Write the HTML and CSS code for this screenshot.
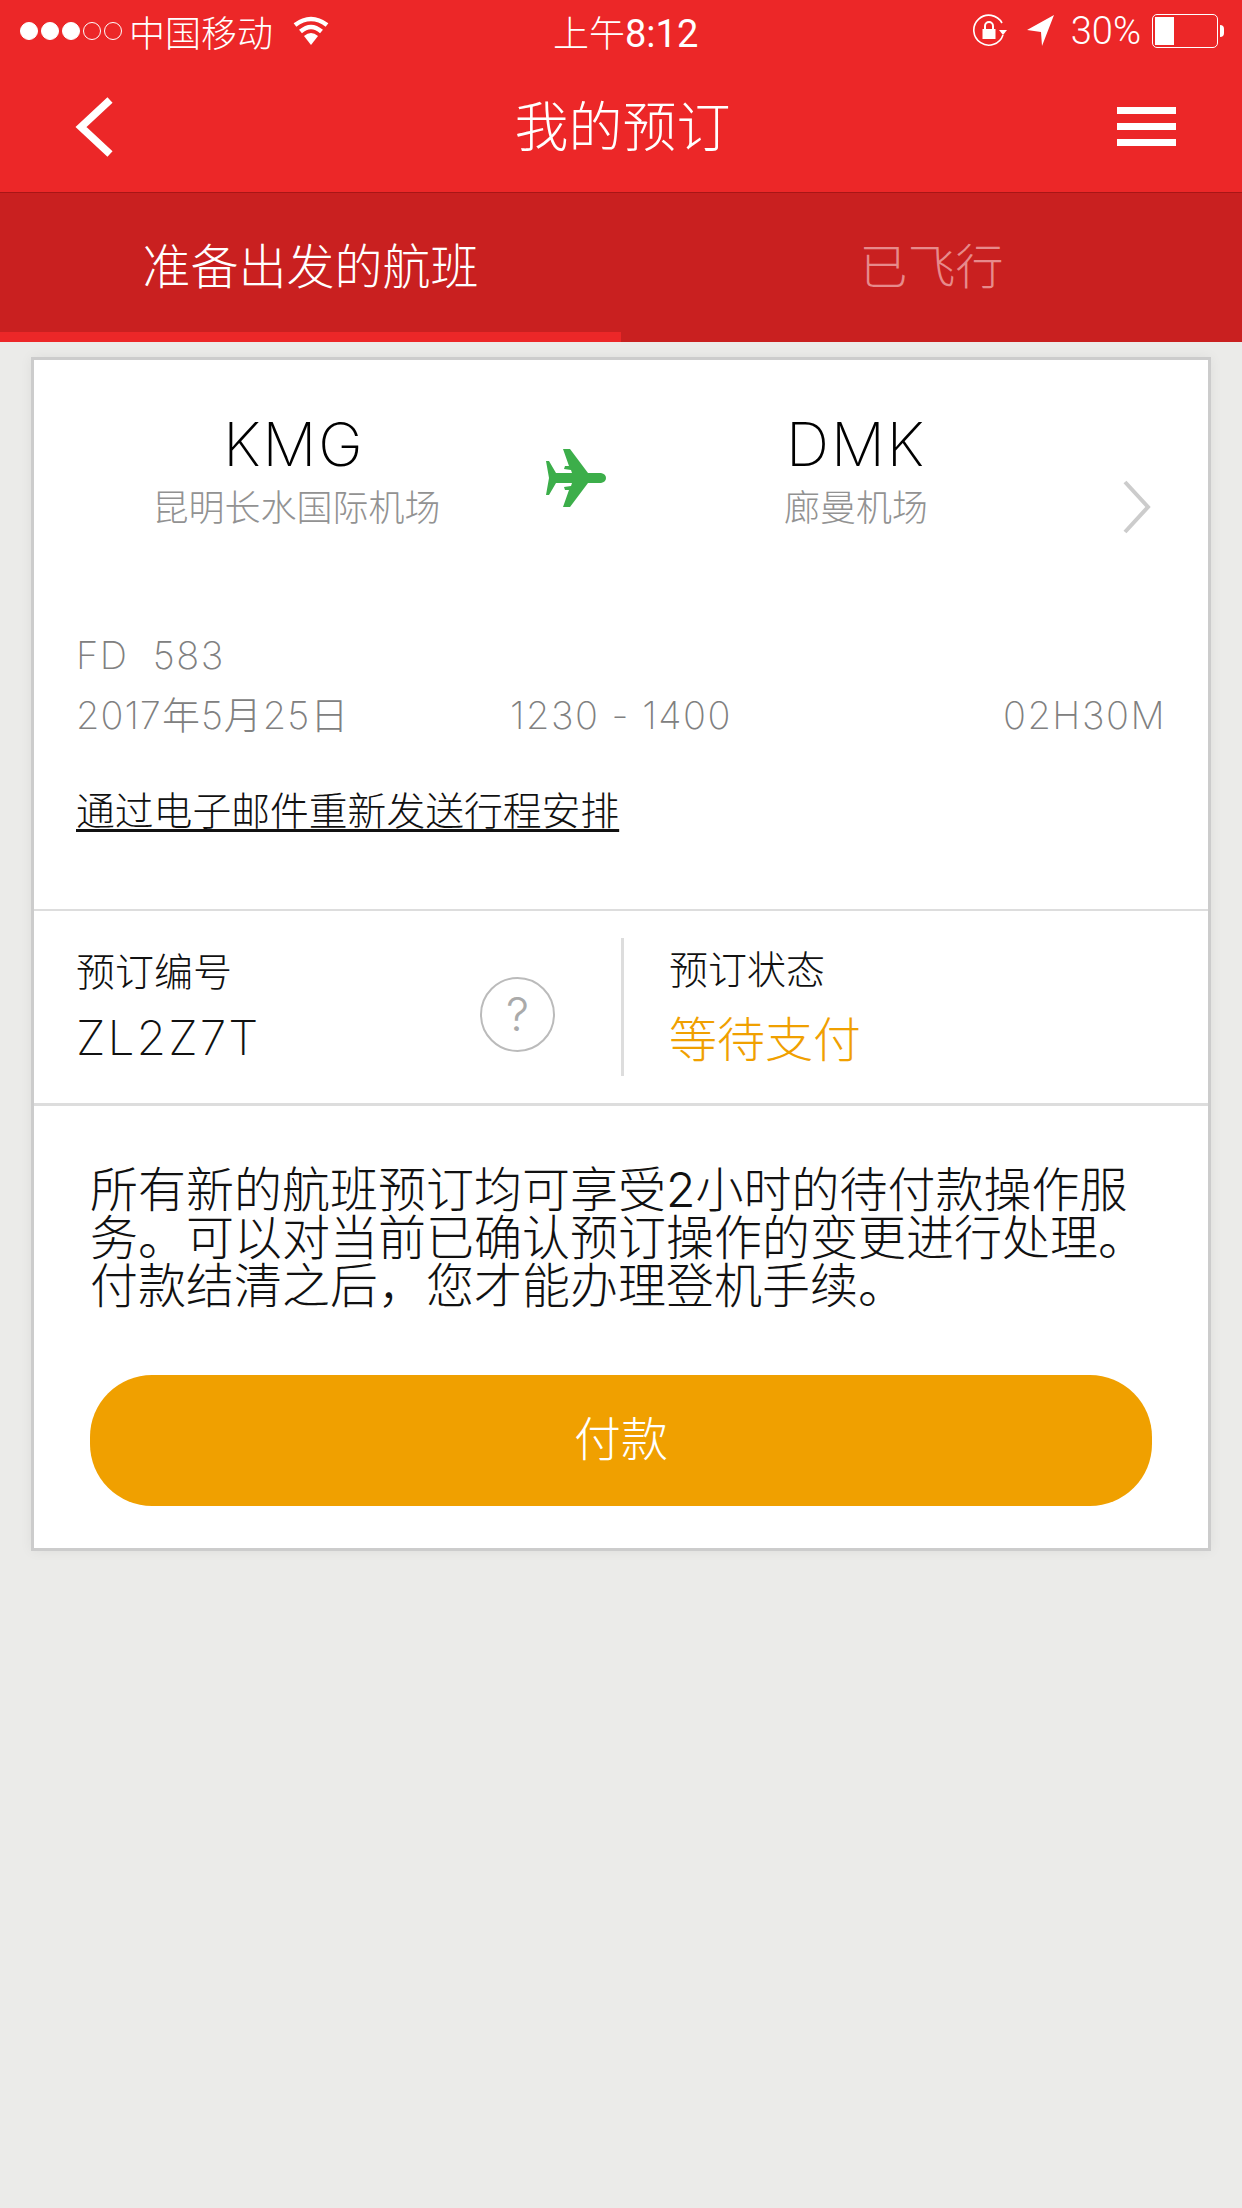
FILE: index.html
```html
<!DOCTYPE html>
<html lang="zh">
<head>
  <meta charset="UTF-8">
  <meta name="viewport" content="width=device-width, initial-scale=1.0">
  <title>我的预订</title>
  <link rel="stylesheet" href="styles.css">
</head>
<body>
  <div class="status-bar">
    <div class="status-left">
      <div class="signal">
        <span class="dot"></span><span class="dot"></span><span class="dot"></span>
        <span class="dot off"></span><span class="dot off"></span>
      </div>
      <span class="carrier">中国移动</span>
      <svg class="wifi" viewBox="0 0 36 30" width="36" height="30">
        <path d="M18 29 L11 20 Q18 14 25 20 Z" fill="#fff"/>
        <path d="M7.5 15.5 Q18 6.5 28.5 15.5" fill="none" stroke="#fff" stroke-width="4.5"/>
        <path d="M2 9 Q18 -3 34 9" fill="none" stroke="#fff" stroke-width="4.5"/>
      </svg>
    </div>
    <div class="status-time">上午<span class="clock">8:12</span></div>
    <div class="status-right">
      <svg class="rotate-lock" viewBox="0 0 34 36" width="34" height="36">
        <path d="M30 22 A15 15 0 1 1 29 10" fill="none" stroke="#fff" stroke-width="1.6"/>
        <path d="M26 17 H34 L30 22 Z" fill="#fff"/>
        <rect x="9.5" y="16" width="13" height="10" fill="#fff"/>
        <path d="M12 16 V13 A4 4 0 0 1 20 13 V16" fill="none" stroke="#fff" stroke-width="2"/>
      </svg>
      <svg class="arrow" viewBox="0 0 28 32" width="28" height="32">
        <path d="M27 0 L15 31 L14 17 L0 15 Z" fill="#fff"/>
      </svg>
      <span class="battery-pct">30%</span>
      <div class="battery"><div class="battery-level"></div></div>
      <div class="battery-nub"></div>
    </div>
  </div>

  <div class="nav-bar">
    <svg class="back" viewBox="0 0 40 60" width="40" height="60">
      <path d="M36 3 L7 30 L36 57" fill="none" stroke="#fff" stroke-width="7.5"/>
    </svg>
    <h1>我的预订</h1>
    <div class="burger"><span></span><span></span><span></span></div>
  </div>

  <div class="tabs">
    <div class="tab active">准备出发的航班</div>
    <div class="tab">已飞行</div>
  </div>

  <div class="card">
    <div class="flight">
      <div class="route">
        <div class="stop">
          <div class="code">KMG</div>
          <div class="airport">昆明长水国际机场</div>
        </div>
        <svg class="plane" viewBox="0 0 60 58" width="60" height="58">
          <path d="M55 24 Q60 25 60 29 Q60 33 55 34 L42 34 L24 58 L17 58 L23 41 L19 41 L18 38 L25 37 L26 34 L10 34 L3 46 L0 46 L3 29 L0 12 L3 12 L10 24 L26 24 L25 21 L18 20 L19 17 L23 17 L17 0 L24 0 L42 24 Z" fill="#3cae4a"/>
        </svg>
        <div class="stop">
          <div class="code">DMK</div>
          <div class="airport">廊曼机场</div>
        </div>
        <svg class="more" viewBox="0 0 30 54" width="30" height="54">
          <path d="M3 2 L26 27 L3 52" fill="none" stroke="#ccc" stroke-width="4"/>
        </svg>
      </div>
      <div class="flight-no">FD&nbsp; 583</div>
      <div class="flight-times">
        <span class="date">2017年5月25日</span>
        <span class="time">1230 - 1400</span>
        <span class="duration">02H30M</span>
      </div>
      <a class="resend" href="#">通过电子邮件重新发送行程安排</a>
    </div>

    <div class="booking">
      <div class="booking-col ref">
        <div>
          <div class="booking-label">预订编号</div>
          <div class="booking-code">ZL2Z7T</div>
        </div>
        <div class="help">?</div>
      </div>
      <div class="booking-col state">
        <div class="booking-label">预订状态</div>
        <div class="booking-status">等待支付</div>
      </div>
    </div>

    <div class="notice">
      <p>所有新的航班预订均可享受2小时的待付款操作服<br>务。可以对当前已确认预订操作的变更进行处理。<br>付款结清之后，您才能办理登机手续。</p>
      <button class="pay">付款</button>
    </div>
  </div>
</body>
</html>
```

FILE: styles.css
```css
body {
  margin: 0;
  height: 2208px;
  background: #ebebe9;
  font-family: Inter, "Noto Sans CJK SC", sans-serif;
  font-weight: 300;
  color: #111;
}
h1 {
  margin: 0 0 0 14px;
  font-size: 54px;
  font-weight: 300;
  color: #fff;
}
p {
  margin: 0;
}

/* status bar */
.status-bar {
  height: 64px;
  box-sizing: border-box;
  background: #ec2728;
  color: #fff;
  display: flex;
  justify-content: space-between;
  align-items: center;
  padding: 0 18px 3px 20px;
  position: relative;
}
.status-left, .status-right {
  display: flex;
  align-items: center;
}
.signal {
  display: flex;
  gap: 3px;
}
.dot {
  width: 18px;
  height: 18px;
  border-radius: 50%;
  border: 1px solid #fff;
  background: #fff;
  box-sizing: border-box;
}
.dot.off {
  background: none;
}
.carrier {
  font-size: 36px;
  margin-left: 7px;
}
.wifi {
  margin-left: 20px;
}
.status-time {
  position: absolute;
  left: 553px;
  font-size: 36px;
  font-family: Roboto, "Noto Sans CJK SC", sans-serif;
  font-weight: 300;
}
.clock {
  font-size: 38px;
  font-weight: 400;
}
.arrow {
  margin-left: 20px;
}
.battery-pct {
  margin-left: 16px;
  font-size: 38px;
  font-family: Roboto, sans-serif;
  font-weight: 300;
}
.battery {
  margin-left: 11px;
  width: 66px;
  height: 34px;
  border: 1px solid #fff;
  border-radius: 5px;
  box-sizing: border-box;
  padding: 2px;
}
.battery-level {
  width: 19px;
  height: 100%;
  background: #fff;
}
.battery-nub {
  width: 4px;
  height: 12px;
  margin-left: 2px;
  background: #fff;
  border-radius: 0 4px 4px 0;
}

/* nav */
.nav-bar {
  height: 129px;
  box-sizing: border-box;
  background: #ec2728;
  border-bottom: 1px solid #a81616;
  display: flex;
  justify-content: space-between;
  align-items: center;
  padding: 0 66px 9px 74px;
}
.back {
  margin-top: 6px;
}
.burger {
  width: 59px;
  display: flex;
  flex-direction: column;
  gap: 9px;
  margin-top: 5px;
}
.burger span {
  height: 7px;
  background: #fff;
}

/* tabs */
.tabs {
  height: 149px;
  background: #c92020;
  display: flex;
}
.tab {
  flex: 1;
  height: 139px;
  display: flex;
  align-items: center;
  justify-content: center;
  font-size: 48px;
  color: #e78a8b;
  border-bottom: 10px solid transparent;
}
.tab.active {
  color: #fff;
  border-bottom-color: #ec2728;
}

/* card */
.card {
  width: 1180px;
  box-sizing: border-box;
  margin: 15px 0 0 31px;
  background: #fff;
  border: 3px solid #ccc;
  box-shadow: 0 0 12px rgba(0, 0, 0, 0.06);
}
.flight {
  height: 549px;
  padding-left: 42px;
  padding-right: 42px;
  border-bottom: 2px solid #ddd;
}
.route {
  display: flex;
  align-items: flex-start;
  margin-left: 18px;
  height: 271px;
}
.stop {
  width: 400px;
  text-align: center;
  padding-top: 54px;
}
.stop:first-child .airport {
  padding-left: 5px;
}
.code {
  font-size: 60px;
  line-height: 60px;
  color: #000;
  font-weight: 200;
  letter-spacing: 2px;
}
.airport {
  margin-top: 12px;
  font-size: 36px;
  line-height: 44px;
  color: #929292;
}
.plane {
  margin: 89px 50px 0 52px;
}
.more {
  margin: 120px 0 0 66px;
}
.flight-no {
  font-size: 38px;
  line-height: 48px;
  color: #808080;
  font-weight: 200;
  letter-spacing: 1.5px;
}
.flight-times {
  display: flex;
  margin-top: 12px;
  font-size: 38px;
  line-height: 48px;
  color: #808080;
  font-weight: 200;
  letter-spacing: 1.5px;
}
.date {
  width: 434px;
}
.date {
  letter-spacing: 1px;
}
.duration {
  margin-left: auto;
}
.resend {
  display: inline-block;
  margin-top: 50px;
  font-size: 38.8px;
  line-height: 44px;
  color: #111;
  text-decoration: underline;
  text-underline-offset: 4px;
}

/* booking row */
.booking {
  height: 192px;
  display: flex;
  align-items: center;
  border-bottom: 3px solid #ddd;
}
.booking-col {
  height: 138px;
  box-sizing: border-box;
}
.ref {
  width: 590px;
  padding: 0 66px 0 42px;
  display: flex;
  justify-content: space-between;
  align-items: center;
  border-right: 3px solid #ddd;
}
.state {
  padding-left: 45px;
}
.booking-label {
  font-size: 39px;
  line-height: 52px;
  margin-top: 6px;
  color: #111;
}
.ref .booking-label {
  margin-top: 0;
}
.booking-code {
  margin-top: 10px;
  font-size: 48px;
  line-height: 60px;
  color: #111;
  font-weight: 200;
  letter-spacing: 2px;
}
.booking-status {
  margin-top: 14px;
  font-size: 48px;
  line-height: 60px;
  color: #f0a000;
}
.help {
  width: 75px;
  height: 75px;
  box-sizing: border-box;
  margin-top: 14px;
  border: 2px solid #bbb;
  border-radius: 50%;
  color: #aaa;
  font-size: 46px;
  font-weight: 300;
  line-height: 70px;
  text-align: center;
}

/* notice and pay */
.notice {
  padding: 60px 56px 42px 56px;
}
.notice p {
  font-size: 48px;
  line-height: 48px;
  color: #111;
  white-space: nowrap;
}
.pay {
  display: block;
  width: 100%;
  height: 131px;
  margin-top: 65px;
  padding: 0 0 11px;
  border: none;
  border-radius: 62px;
  background: #f0a000;
  color: #fff;
  font-family: inherit;
  font-weight: 300;
  font-size: 47px;
}
```
